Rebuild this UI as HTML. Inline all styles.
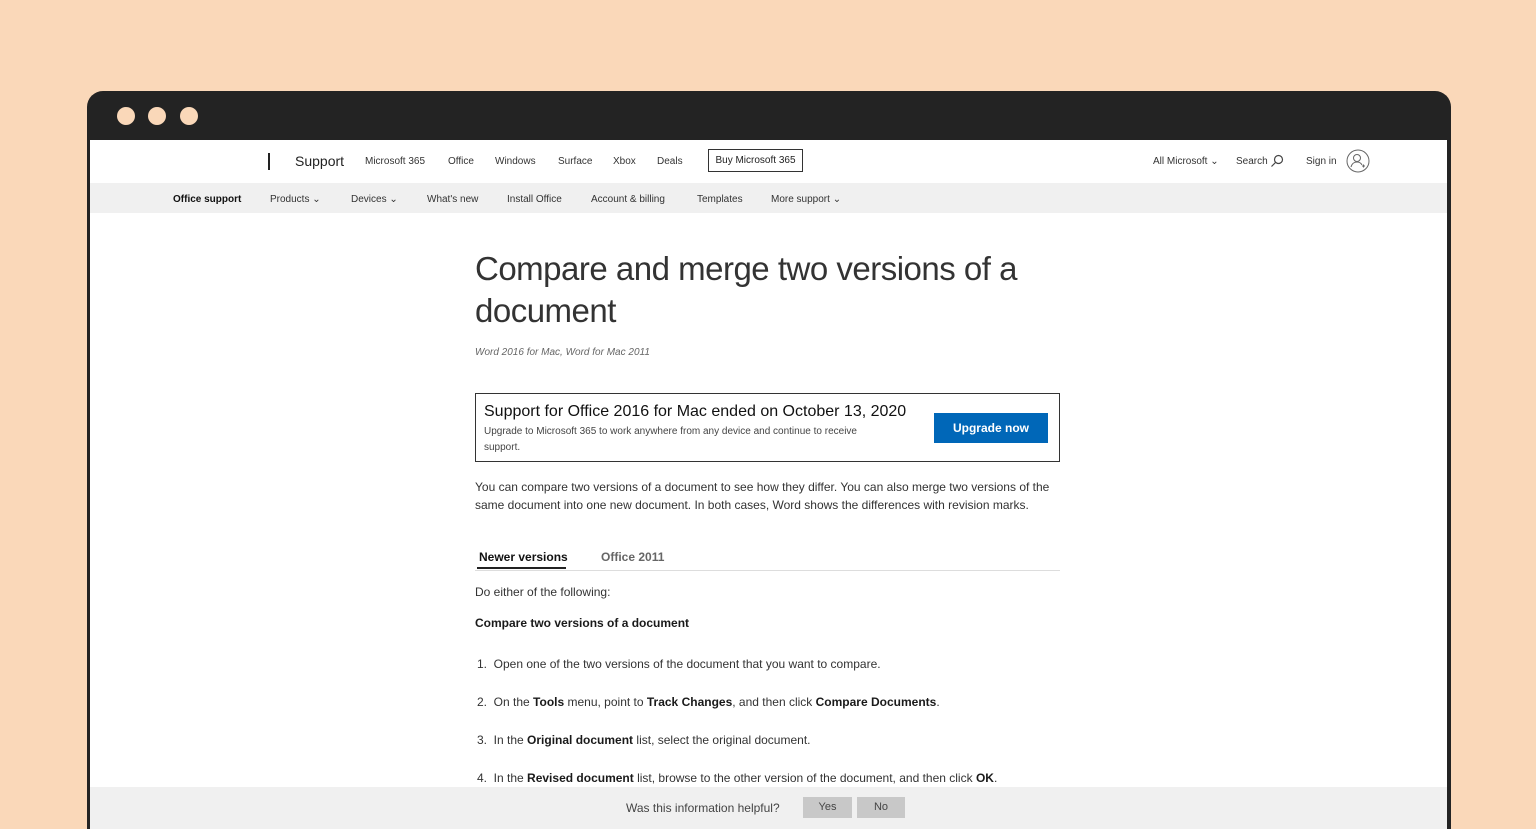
<!DOCTYPE html>
<html><head><meta charset="utf-8"><style>
*{margin:0;padding:0;box-sizing:border-box}
html,body{width:1536px;height:829px;overflow:hidden}
body{background:#fad8b9;position:relative;font-family:"Liberation Sans",sans-serif;color:#262626}
.frame{position:absolute;left:87px;top:91px;width:1364px;height:738px;background:#232323;border-radius:16px 16px 0 0}
.dot{position:absolute;top:107px;width:18px;height:18px;border-radius:50%;background:#fad8b9}
.page{position:absolute;left:90px;top:140px;width:1357px;height:689px;background:#fff;overflow:hidden}
.a{position:absolute;white-space:nowrap}
.nav{font-size:10px;color:#333}
.sub{position:absolute;left:0;top:43px;width:1357px;height:30px;background:#f0f0f0}
.p{font-size:12px;color:#333}
b{font-weight:bold;color:#1a1a1a}
.fb{position:absolute;left:0;top:647px;width:1357px;height:42px;background:#f0f0f0}
.btn{position:absolute;top:10px;height:21px;background:#c8c8c8;font-size:11px;color:#444;text-align:center;line-height:21px}
</style></head><body>
<div class="frame"></div>
<div class="dot" style="left:117px"></div><div class="dot" style="left:148px"></div><div class="dot" style="left:180px"></div>
<div class="page">
<div class="a" style="left:178px;top:13px;width:2px;height:17px;background:#222"></div>
<div class="a" style="left:205px;top:13px;font-size:14px;color:#222">Support</div>
<div class="a nav" style="left:275px;top:16px">Microsoft 365</div>
<div class="a nav" style="left:358px;top:16px">Office</div>
<div class="a nav" style="left:405px;top:16px">Windows</div>
<div class="a nav" style="left:468px;top:16px">Surface</div>
<div class="a nav" style="left:523px;top:16px">Xbox</div>
<div class="a nav" style="left:567px;top:16px">Deals</div>
<div class="a nav" style="left:618px;top:9px;width:95px;height:23px;border:1px solid #333;line-height:21px;text-align:center;color:#222">Buy Microsoft 365</div>
<div class="a nav" style="left:1063px;top:16px">All Microsoft ⌄</div>
<div class="a nav" style="left:1146px;top:16px">Search</div>
<svg class="a" style="left:1180px;top:14px" width="14" height="14" viewBox="0 0 14 14"><circle cx="8.5" cy="5.5" r="4" fill="none" stroke="#444" stroke-width="1.2"/><path d="M5.5 8.5L1.5 12.5" stroke="#444" stroke-width="1.2"/></svg>
<div class="a nav" style="left:1216px;top:16px">Sign in</div>
<svg class="a" style="left:1256px;top:9px" width="24" height="24" viewBox="0 0 24 24"><circle cx="12" cy="12" r="11" fill="none" stroke="#666"/><circle cx="11" cy="9" r="3.5" fill="none" stroke="#666"/><path d="M5 18c1-4 4-5 6-5s4 1 5 3M16 17h3M17.5 15.5v3" fill="none" stroke="#666"/></svg>
<div class="sub">
<div class="a nav" style="left:83px;top:11px;font-weight:bold;color:#111">Office support</div>
<div class="a nav" style="left:180px;top:11px">Products ⌄</div>
<div class="a nav" style="left:261px;top:11px">Devices ⌄</div>
<div class="a nav" style="left:337px;top:11px">What's new</div>
<div class="a nav" style="left:417px;top:11px">Install Office</div>
<div class="a nav" style="left:501px;top:11px">Account &amp; billing</div>
<div class="a nav" style="left:607px;top:11px">Templates</div>
<div class="a nav" style="left:681px;top:11px">More support ⌄</div>
</div>
<div class="a" style="left:385px;top:108px;font-size:33px;color:#333;line-height:42px;white-space:normal;width:600px;letter-spacing:-0.5px">Compare and merge two versions of a document</div>
<div class="a" style="left:385px;top:207px;font-size:10px;font-style:italic;color:#666">Word 2016 for Mac, Word for Mac 2011</div>
<div class="a" style="left:385px;top:253px;width:585px;height:69px;border:1px solid #333">
<div class="a" style="left:8px;top:9px;font-size:16px;color:#111">Support for Office 2016 for Mac ended on October 13, 2020</div>
<div class="a" style="left:8px;top:30px;font-size:10px;color:#444;line-height:16px;white-space:normal;width:390px">Upgrade to Microsoft 365 to work anywhere from any device and continue to receive support.</div>
<div class="a" style="left:458px;top:19px;width:114px;height:30px;background:#0067b8;color:#fff;font-size:12px;font-weight:bold;text-align:center;line-height:30px">Upgrade now</div>
</div>
<div class="a p" style="left:385px;top:338px;line-height:18px;white-space:normal;width:590px">You can compare two versions of a document to see how they differ. You can also merge two versions of the same document into one new document. In both cases, Word shows the differences with revision marks.</div>
<div class="a" style="left:389px;top:410px;font-size:12px;font-weight:bold;color:#111">Newer versions</div>
<div class="a" style="left:387px;top:427px;width:89px;height:2px;background:#222"></div>
<div class="a" style="left:511px;top:410px;font-size:12px;font-weight:bold;color:#666">Office 2011</div>
<div class="a" style="left:385px;top:430px;width:585px;height:1px;background:#ddd"></div>
<div class="a p" style="left:385px;top:445px">Do either of the following:</div>
<div class="a p" style="left:385px;top:476px"><b>Compare two versions of a document</b></div>
<div class="a p" style="left:387px;top:517px">1.&nbsp; Open one of the two versions of the document that you want to compare.</div>
<div class="a p" style="left:387px;top:555px">2.&nbsp; On the <b>Tools</b> menu, point to <b>Track Changes</b>, and then click <b>Compare Documents</b>.</div>
<div class="a p" style="left:387px;top:593px">3.&nbsp; In the <b>Original document</b> list, select the original document.</div>
<div class="a p" style="left:387px;top:631px">4.&nbsp; In the <b>Revised document</b> list, browse to the other version of the document, and then click <b>OK</b>.</div>
<div class="fb">
<div class="a" style="left:536px;top:14px;font-size:12px;color:#444">Was this information helpful?</div>
<div class="btn" style="left:713px;width:49px">Yes</div>
<div class="btn" style="left:767px;width:48px">No</div>
</div>
</div>
</body></html>
